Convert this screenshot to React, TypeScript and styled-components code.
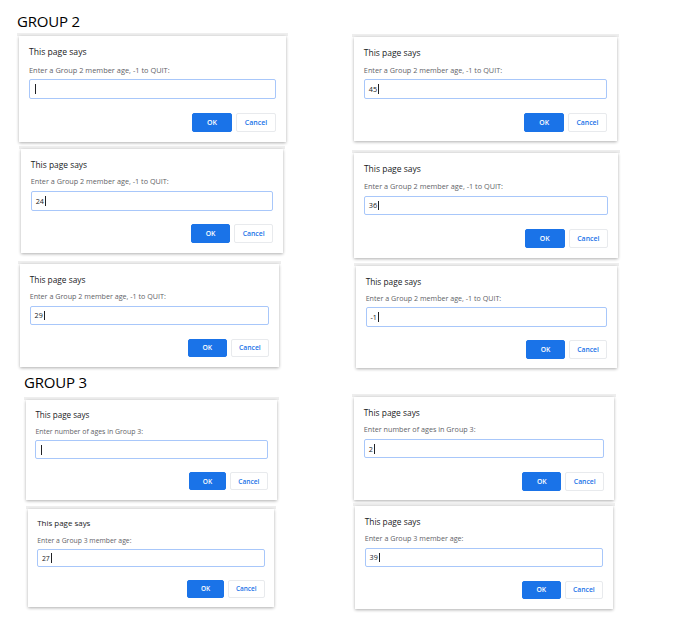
import * as React from "react";
import styled, { createGlobalStyle } from "styled-components";

interface PromptShot {
  message: string;
  value: string;
  x: number;
  dy: number;
  width: number;
  scale: number;
}

const group2: PromptShot[][] = [
  [
    { message: "Enter a Group 2 member age, -1 to QUIT:", value: "", x: 19, dy: 0, width: 267, scale: 1 },
    { message: "Enter a Group 2 member age, -1 to QUIT:", value: "45", x: 354, dy: 1, width: 263, scale: 0.985 },
  ],
  [
    { message: "Enter a Group 2 member age, -1 to QUIT:", value: "24", x: 21, dy: 0, width: 262, scale: 0.98 },
    { message: "Enter a Group 2 member age, -1 to QUIT:", value: "36", x: 354, dy: 4, width: 264, scale: 0.99 },
  ],
  [
    { message: "Enter a Group 2 member age, -1 to QUIT:", value: "29", x: 20, dy: 0, width: 259, scale: 0.97 },
    { message: "Enter a Group 2 member age, -1 to QUIT:", value: "-1", x: 356, dy: 2, width: 261, scale: 0.965 },
  ],
];

const group3: PromptShot[][] = [
  [
    { message: "Enter number of ages in Group 3:", value: "", x: 26, dy: 3, width: 251, scale: 0.94 },
    { message: "Enter number of ages in Group 3:", value: "2", x: 354, dy: 0, width: 260, scale: 0.975 },
  ],
  [
    { message: "Enter a Group 3 member age:", value: "27", x: 28, dy: 3, width: 246, scale: 0.925 },
    { message: "Enter a Group 3 member age:", value: "39", x: 355, dy: 0, width: 258, scale: 0.97 },
  ],
];

const RIGHT_COLUMN = 340;

const GlobalStyle = createGlobalStyle`
  html, body {
    margin: 0;
    padding: 0;
    background: #ffffff;
  }
  body {
    font-family: "Open Sans", "Noto Sans", sans-serif;
    color: #202124;
  }
`;

const Page = styled.div`
  width: 692px;
  height: 631px;
  display: grid;
  grid-template-columns: ${RIGHT_COLUMN}px 1fr;
  grid-template-rows: 33px 113px 115px 109px 24px 109px 1fr;
  overflow: hidden;
`;

const GroupTitle = styled.h2<{ $left: number; $top: number }>`
  grid-column: 1 / -1;
  margin: 0;
  padding: ${p => p.$top}px 0 0 ${p => p.$left}px;
  font-family: "Open Sans", sans-serif;
  font-size: 15px;
  font-weight: 400;
  line-height: 20px;
  letter-spacing: -0.2px;
  color: #000000;
`;

const Shot = styled.div<{ $left: number; $dy: number; $width: number; $s: number }>`
  --s: ${p => p.$s};
  align-self: start;
  margin-left: ${p => p.$left - 2}px;
  margin-top: ${p => p.$dy}px;
  width: ${p => p.$width + 4}px;
  border-top: 3px solid #eeeeee;
`;

const Dialog = styled.div`
  margin: 0 2px;
  background: #ffffff;
  box-shadow: 0 1px 3px rgba(0, 0, 0, 0.32);
  padding: calc(10px * var(--s)) calc(10px * var(--s));
  display: flex;
  flex-direction: column;
`;

const Title = styled.div`
  font-size: calc(8.6px * var(--s));
  line-height: calc(12px * var(--s));
  color: #202124;
`;

const Message = styled.div`
  margin-top: calc(7px * var(--s));
  font-size: calc(7.4px * var(--s));
  line-height: calc(10px * var(--s));
  color: #5f6368;
  white-space: nowrap;
`;

const Field = styled.div`
  margin-top: calc(4px * var(--s));
  height: calc(20px * var(--s));
  box-sizing: border-box;
  border: 1px solid #a8c7fa;
  border-radius: 2px;
  display: flex;
  align-items: center;
  padding-left: calc(4px * var(--s));
  font-size: calc(7.4px * var(--s));
  color: #202124;
`;

const Caret = styled.span`
  display: inline-block;
  width: 1px;
  height: calc(10px * var(--s));
  background: #202124;
  margin-left: 1px;
`;

const Actions = styled.div`
  margin-top: calc(14px * var(--s));
  display: flex;
  justify-content: flex-end;
  gap: calc(4px * var(--s));
`;

const ActionButton = styled.div<{ $primary?: boolean }>`
  width: calc(40px * var(--s));
  height: calc(19px * var(--s));
  box-sizing: border-box;
  border-radius: 2px;
  display: flex;
  align-items: center;
  justify-content: center;
  font-size: calc(7px * var(--s));
  font-weight: 600;
  background: ${p => (p.$primary ? "#1a73e8" : "#ffffff")};
  color: ${p => (p.$primary ? "#ffffff" : "#1a73e8")};
  border: 1px solid ${p => (p.$primary ? "#1a73e8" : "#e8eaed")};
`;

const PromptDialog = ({ shot }: { shot: PromptShot }) => {
  const left = shot.x >= RIGHT_COLUMN ? shot.x - RIGHT_COLUMN : shot.x;
  return (
    <Shot $left={left} $dy={shot.dy} $width={shot.width} $s={shot.scale}>
      <Dialog>
        <Title>This page says</Title>
        <Message>{shot.message}</Message>
        <Field>
          {shot.value}
          <Caret />
        </Field>
        <Actions>
          <ActionButton $primary>OK</ActionButton>
          <ActionButton>Cancel</ActionButton>
        </Actions>
      </Dialog>
    </Shot>
  );
};

export default function App() {
  return (
    <>
      <GlobalStyle />
      <Page>
        <GroupTitle $left={17} $top={11}>GROUP 2</GroupTitle>
        {group2.flat().map((shot, i) => (
          <PromptDialog key={"g2-" + i} shot={shot} />
        ))}
        <GroupTitle $left={24} $top={2}>GROUP 3</GroupTitle>
        {group3.flat().map((shot, i) => (
          <PromptDialog key={"g3-" + i} shot={shot} />
        ))}
      </Page>
    </>
  );
}
